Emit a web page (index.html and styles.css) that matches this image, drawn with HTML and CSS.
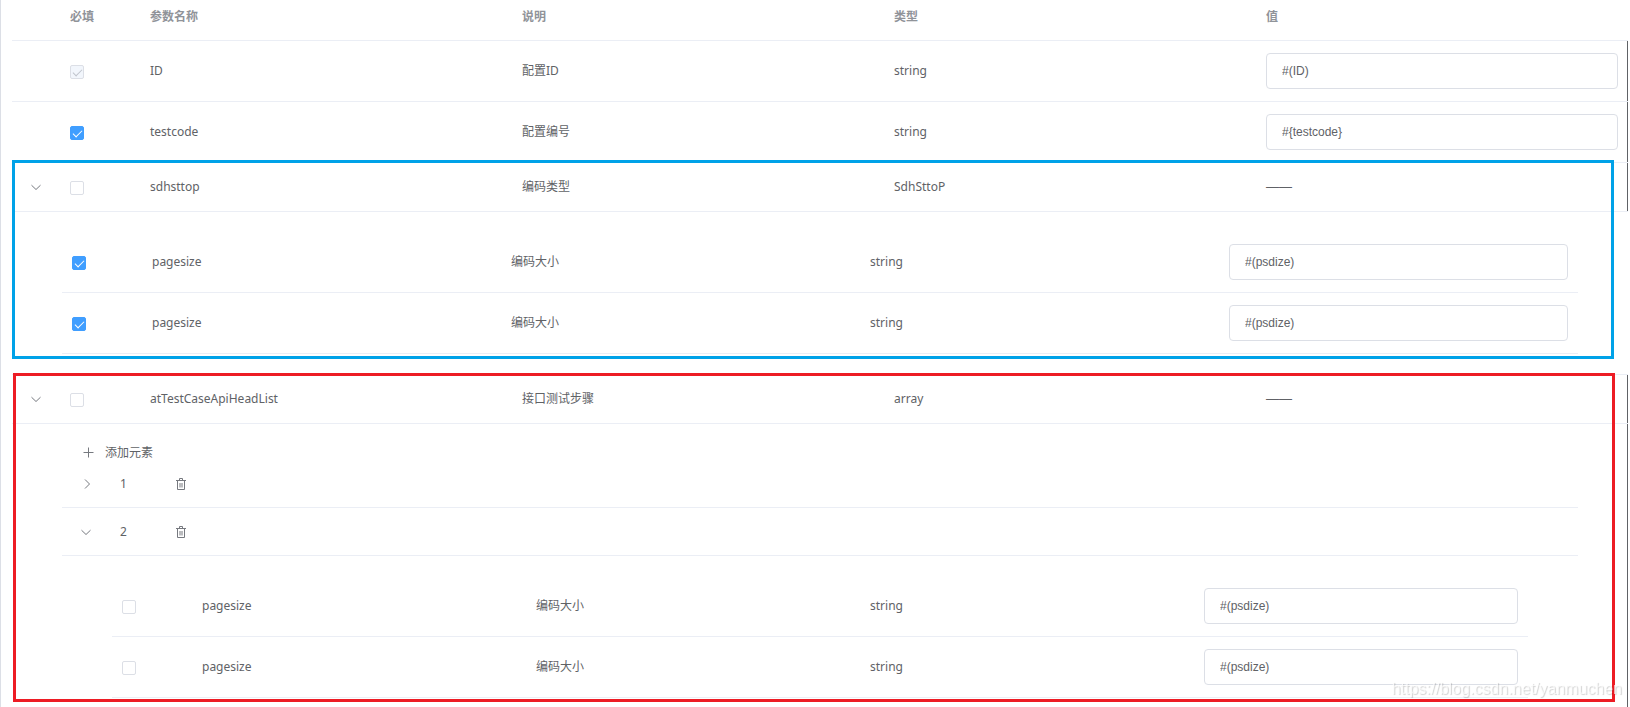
FILE: index.html
```html
<!DOCTYPE html>
<html lang="zh-CN">
<head>
<meta charset="utf-8">
<title>参数配置</title>
<link rel="stylesheet" href="styles.css">
</head>
<body>
<svg class="sprite" aria-hidden="true">
  <symbol id="down" viewBox="0 0 12 12"><path d="M1.500 4.200 6 8.500 10.500 4.200"/></symbol>
  <symbol id="right" viewBox="0 0 12 12"><path d="M5 1.500 9.500 6 5 10.500"/></symbol>
  <symbol id="plus" viewBox="0 0 12 12"><path d="M6.500 1.500v10M1.500 6.500h10"/></symbol>
  <symbol id="trash" viewBox="0 0 10 12"><path d="M0 2.500h10M3.500 2.500v-2h3v2M1.500 2.500v9h7v-9M4 5v4.500M6 5v4.500"/></symbol>
</svg>
<main class="panel">
  <table class="grid">
    <colgroup><col class="col-expand"><col class="col-check"><col><col><col><col></colgroup>
    <thead>
      <tr><th class="head"></th><th class="head">必填</th><th class="head">参数名称</th><th class="head">说明</th><th class="head">类型</th><th class="head">值</th></tr>
    </thead>
    <tbody>
      <tr>
        <td class="cell"></td>
        <td class="cell"><input class="check" type="checkbox" aria-label="必填 ID" checked disabled></td>
        <td class="cell label">ID</td><td class="cell label">配置ID</td><td class="cell label">string</td>
        <td class="cell edge"><input class="field" type="text" aria-label="ID 值" value="#(ID)"></td>
      </tr>
      <tr>
        <td class="cell"></td>
        <td class="cell"><input class="check" type="checkbox" aria-label="必填 testcode" checked></td>
        <td class="cell label">testcode</td><td class="cell label">配置编号</td><td class="cell label">string</td>
        <td class="cell edge"><input class="field" type="text" aria-label="testcode 值" value="#{testcode}"></td>
      </tr>
    </tbody>
    <tbody class="group group-object">
      <tr class="parent">
        <td class="cell toggle-cell"><button class="icon-button" aria-label="收起 sdhsttop"><svg class="icon"><use href="#down"/></svg></button></td>
        <td class="cell"><input class="check" type="checkbox" aria-label="必填 sdhsttop"></td>
        <td class="cell label">sdhsttop</td><td class="cell label">编码类型</td><td class="cell label">SdhSttoP</td>
        <td class="cell label edge"><span class="dash">——</span></td>
      </tr>
      <tr>
        <td class="expanded" colspan="6">
          <table class="grid">
            <colgroup><col class="col-check"><col><col><col><col></colgroup>
            <tbody>
              <tr>
                <td class="cell"><input class="check" type="checkbox" aria-label="必填 pagesize" checked></td>
                <td class="cell label">pagesize</td><td class="cell label">编码大小</td><td class="cell label">string</td>
                <td class="cell"><input class="field" type="text" aria-label="pagesize 值" value="#(psdize)"></td>
              </tr>
              <tr>
                <td class="cell"><input class="check" type="checkbox" aria-label="必填 pagesize" checked></td>
                <td class="cell label">pagesize</td><td class="cell label">编码大小</td><td class="cell label">string</td>
                <td class="cell"><input class="field" type="text" aria-label="pagesize 值" value="#(psdize)"></td>
              </tr>
            </tbody>
          </table>
        </td>
      </tr>
    </tbody>
    <tbody class="group group-array">
      <tr class="parent">
        <td class="cell toggle-cell"><button class="icon-button" aria-label="收起 atTestCaseApiHeadList"><svg class="icon"><use href="#down"/></svg></button></td>
        <td class="cell"><input class="check" type="checkbox" aria-label="必填 atTestCaseApiHeadList"></td>
        <td class="cell label">atTestCaseApiHeadList</td><td class="cell label">接口测试步骤</td><td class="cell label">array</td>
        <td class="cell label edge"><span class="dash">——</span></td>
      </tr>
      <tr>
        <td class="expanded edge" colspan="6">
          <button class="add"><svg class="icon"><use href="#plus"/></svg>添加元素</button>
          <table class="grid">
            <colgroup><col class="col-expand"><col class="col-index"><col></colgroup>
            <tbody>
              <tr>
                <td class="cell toggle-cell"><button class="icon-button" aria-label="展开 1"><svg class="icon"><use href="#right"/></svg></button></td>
                <td class="cell">1</td>
                <td class="cell"><button class="icon-button" aria-label="删除 1"><svg class="icon icon-trash"><use href="#trash"/></svg></button></td>
              </tr>
              <tr>
                <td class="cell toggle-cell"><button class="icon-button" aria-label="收起 2"><svg class="icon"><use href="#down"/></svg></button></td>
                <td class="cell">2</td>
                <td class="cell"><button class="icon-button" aria-label="删除 2"><svg class="icon icon-trash"><use href="#trash"/></svg></button></td>
              </tr>
              <tr>
                <td class="expanded" colspan="3">
                  <table class="grid">
                    <colgroup><col class="col-check"><col><col><col><col></colgroup>
                    <tbody>
                      <tr>
                        <td class="cell"><input class="check" type="checkbox" aria-label="必填 pagesize"></td>
                        <td class="cell label">pagesize</td><td class="cell label">编码大小</td><td class="cell label">string</td>
                        <td class="cell"><input class="field" type="text" aria-label="pagesize 值" value="#(psdize)"></td>
                      </tr>
                      <tr>
                        <td class="cell"><input class="check" type="checkbox" aria-label="必填 pagesize"></td>
                        <td class="cell label">pagesize</td><td class="cell label">编码大小</td><td class="cell label">string</td>
                        <td class="cell"><input class="field" type="text" aria-label="pagesize 值" value="#(psdize)"></td>
                      </tr>
                    </tbody>
                  </table>
                </td>
              </tr>
            </tbody>
          </table>
        </td>
      </tr>
    </tbody>
  </table>
</main>
<div class="watermark">https://blog.csdn.net/yanmuchen</div>
</body>
</html>
```
FILE: styles.css
```css
* {
  box-sizing: border-box;
}

body {
  margin: 0;
  background: #fff;
  color: #606266;
  font-family: "Noto Sans", "Noto Sans CJK SC", sans-serif;
  font-size: 12px;
  line-height: 23px;
}

.sprite {
  display: none;
}

.panel {
  height: 100vh;
  overflow-y: auto;
  scrollbar-width: none;
  padding: 0 2px 0 11px;
  border-left: 1px solid #dcdfe6;
}

.grid {
  width: 100%;
  table-layout: fixed;
  border-collapse: separate;
  border-spacing: 0;
}

.col-expand {
  width: 48px;
}

.col-check {
  width: 80px;
}

.col-index {
  width: 56px;
}

.head {
  height: 41px;
  padding: 5px 10px 12px;
  border-bottom: 1px solid #ebeef5;
  color: #909399;
  font-weight: 700;
  text-align: left;
}

.cell {
  padding: 12px 10px;
  border-bottom: 1px solid #ebeef5;
  vertical-align: middle;
}

.label {
  padding: 11px 10px 13px;
}

.parent {
  height: 49px;
}

.toggle-cell {
  text-align: center;
}

.edge {
  box-shadow: inset -1px 0 #606266;
}

.expanded {
  padding: 20px 50px;
  border-bottom: 1px solid #ebeef5;
}

.check {
  appearance: none;
  display: block;
  position: relative;
  width: 14px;
  height: 14px;
  margin: 2px 0 0;
  border: 1px solid #dcdfe6;
  border-radius: 2px;
  background: #fff;
}

.check:checked {
  border-color: #409eff;
  background: #409eff;
}

.check:checked::after {
  content: "";
  position: absolute;
  top: 1px;
  left: 4px;
  width: 4px;
  height: 8px;
  border: solid #fff;
  border-width: 0 1px 1px 0;
  transform: rotate(45deg);
}

.check:disabled {
  border-color: #dcdfe6;
  background: #f2f6fc;
}

.check:disabled::after {
  border-color: #c0c4cc;
}

.field {
  display: block;
  width: 100%;
  height: 36px;
  padding: 0 15px;
  border: 1px solid #dcdfe6;
  border-radius: 4px;
  background: #fff;
  color: #606266;
  font-family: "Liberation Sans", Arial, sans-serif;
  font-size: 12px;
}

.dash {
  display: block;
  font-family: "Liberation Sans", Arial, sans-serif;
  font-size: 13px;
}

.icon-button,
.add {
  padding: 0;
  border: 0;
  background: none;
  color: inherit;
  font: inherit;
  cursor: pointer;
}

.icon-button {
  display: inline-flex;
  align-items: center;
  height: 23px;
  vertical-align: top;
}

.add {
  display: flex;
  align-items: center;
  gap: 11px;
  height: 16px;
  padding-left: 20px;
}

.icon {
  width: 12px;
  height: 12px;
  fill: none;
  stroke: #76797f;
  stroke-width: 1;
}

.icon-trash {
  width: 10px;
}

.group {
  position: relative;
}

.group::after {
  content: "";
  position: absolute;
  border: 3px solid;
  pointer-events: none;
}

.group-object::after {
  inset: -3px 14px 16px 0;
  border-color: #00a2e8;
}

.group-array::after {
  inset: -2px 13px 38px 1px;
  border-color: #ed1c24;
}

.watermark {
  position: fixed;
  right: 8px;
  bottom: 7px;
  color: rgba(255, 255, 255, 0.7);
  font-family: "Liberation Sans", Arial, sans-serif;
  font-size: 16px;
  text-shadow: 1px 1px 1px rgba(0, 0, 0, 0.18);
  pointer-events: none;
}
```
